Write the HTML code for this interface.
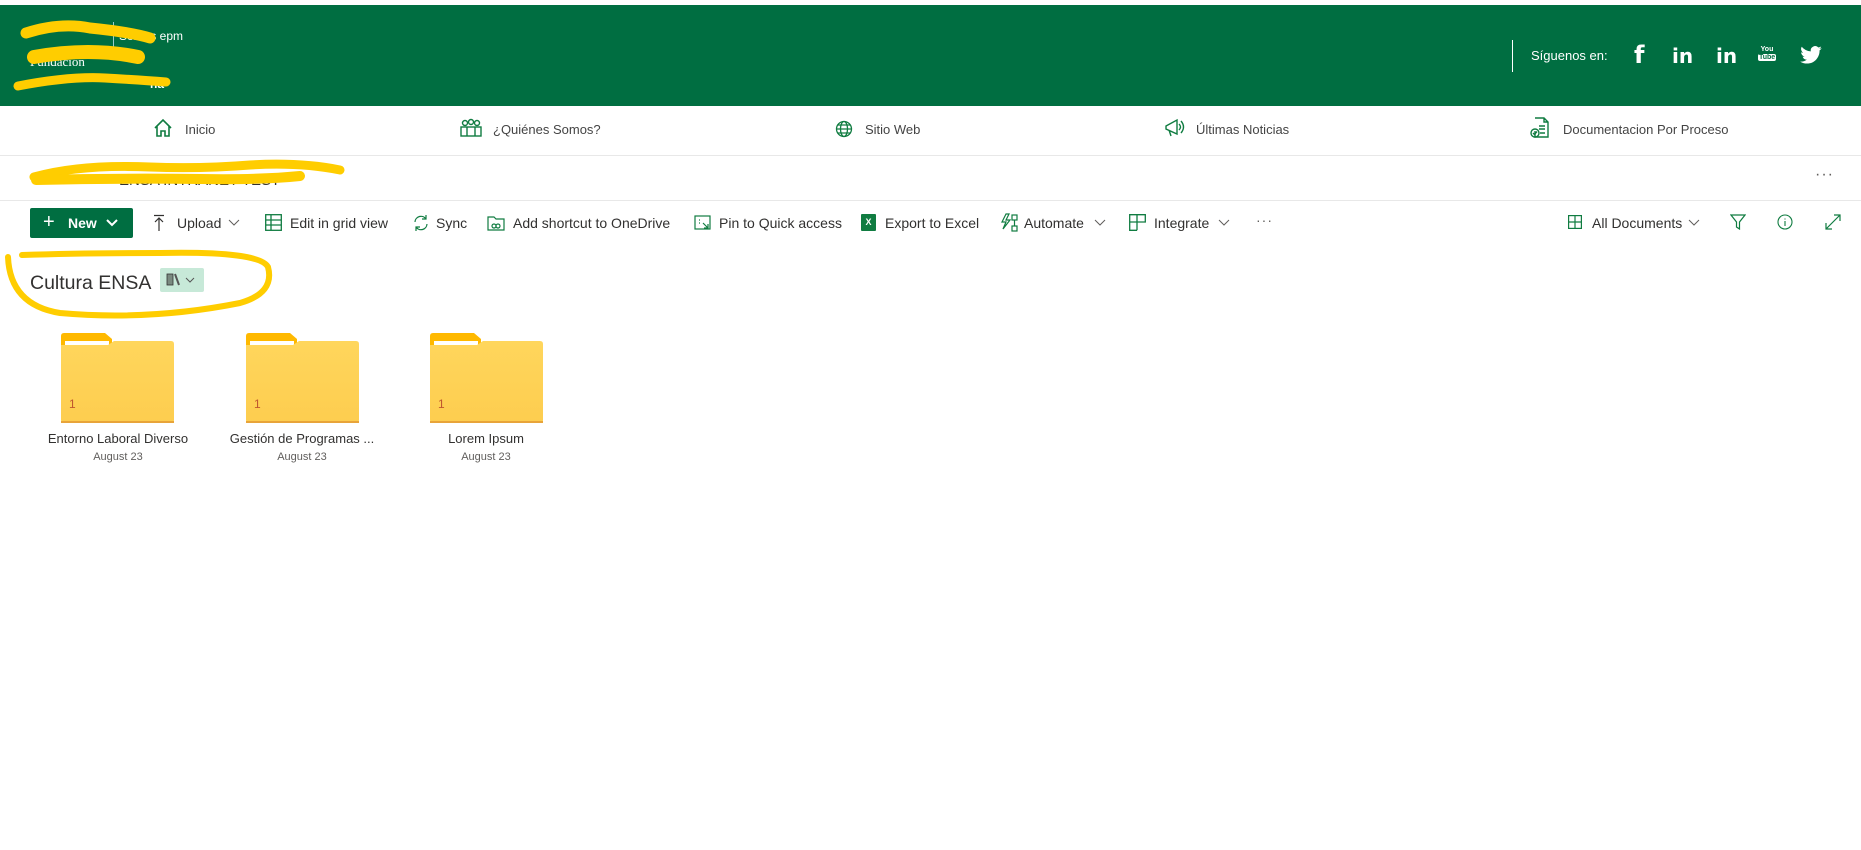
<!DOCTYPE html>
<html><head><meta charset="utf-8"><style>
*{margin:0;padding:0;box-sizing:border-box}
body{width:1861px;height:850px;background:#fff;font-family:"Liberation Sans",sans-serif;position:relative;overflow:hidden;color:#323130}
.a{position:absolute;white-space:nowrap}
.hdr{left:0;top:5px;width:1861px;height:101px;background:#006e41}
.nav{font-size:13px;color:#444;top:122px}
.cmd{font-size:14px;color:#323130;top:215px}
.hr{left:0;width:1861px;height:1px;background:#e8e8e8}
.soc{color:#fff;font-weight:bold;font-size:22px;top:42px}
.fold{width:113px;height:90px}
.lbl{font-size:13px;color:#323130;text-align:center;width:150px}
.dt{font-size:11px;color:#605e5c;text-align:center;width:150px}
</style></head><body>
<div class="a hdr"></div>
<div class="a" style="left:119px;top:29px;font-size:12px;color:#fff">Somos epm</div>
<div class="a" style="left:113px;top:22px;width:1px;height:28px;background:#9cc"></div>
<div class="a" style="left:30px;top:54px;font-size:13px;color:#fff;font-family:'Liberation Serif',serif">Fundación</div>
<div class="a" style="left:150px;top:77px;font-size:12px;color:#fff;font-weight:bold">na</div>
<svg class="a" style="left:0;top:0" width="200" height="100"><g stroke="#ffcd00" stroke-linecap="round" fill="none"><path d="M26 33 Q60 22 90 28 Q130 32 150 38" stroke-width="11"/><path d="M34 57 Q90 47 138 57" stroke-width="14"/><path d="M18 86 Q70 76 105 78 Q140 80 166 82" stroke-width="9"/></g></svg>
<div class="a" style="left:1512px;top:40px;width:1px;height:32px;background:#fff"></div>
<div class="a" style="left:1531px;top:48px;font-size:13px;color:#fff">Síguenos en:</div>
<div class="a soc" style="left:1634px;top:41px;font-size:24px;font-family:'DejaVu Sans',sans-serif">f</div>
<div class="a soc" style="left:1672px;font-family:'DejaVu Sans',sans-serif;font-size:20px;top:44px">in</div>
<div class="a soc" style="left:1716px;font-family:'DejaVu Sans',sans-serif;font-size:20px;top:44px">in</div>
<div class="a" style="left:1758px;top:46px;width:18px;height:20px;color:#fff;font-size:7px;font-weight:bold;text-align:center;line-height:8px">You<br><span style="background:#fff;color:#006e41;border-radius:2px;padding:0 1px">Tube</span></div>
<svg class="a" style="left:1800px;top:46px" width="22" height="18" viewBox="0 0 24 20"><path fill="#fff" d="M24 2.4a10 10 0 0 1-2.8.8A5 5 0 0 0 23.3.5a10 10 0 0 1-3.1 1.2A4.9 4.9 0 0 0 11.8 6 14 14 0 0 1 1.7.9a4.9 4.9 0 0 0 1.5 6.6 4.9 4.9 0 0 1-2.2-.6 4.9 4.9 0 0 0 3.9 4.8 4.9 4.9 0 0 1-2.200.1 4.9 4.9 0 0 0 4.6 3.4A9.9 9.9 0 0 1 0 17.3 14 14 0 0 0 7.5 19.5c9 0 14-7.5 14-14v-.6A10 10 0 0 0 24 2.4z"/></svg>

<svg class="a" style="left:153px;top:118px" width="20" height="20" viewBox="0 0 20 20" fill="none" stroke="#107c41" stroke-width="1.6"><path d="M2 10 L10 2 L18 10 M4 8 V18 H8 V13 H12 V18 H16 V8"/></svg>
<div class="a nav" style="left:185px">Inicio</div>
<svg class="a" style="left:460px;top:118px" width="22" height="20" viewBox="0 0 22 20" fill="none" stroke="#107c41" stroke-width="1.4"><circle cx="5" cy="5" r="2.5"/><circle cx="11" cy="4" r="2.5"/><circle cx="17" cy="5" r="2.5"/><rect x="1" y="9" width="20" height="9"/><path d="M7 9v9M15 9v9"/></svg>
<div class="a nav" style="left:493px">¿Quiénes Somos?</div>
<svg class="a" style="left:835px;top:120px" width="18" height="18" viewBox="0 0 18 18" fill="none" stroke="#107c41" stroke-width="1.3"><circle cx="9" cy="9" r="7.5"/><ellipse cx="9" cy="9" rx="3.5" ry="7.5"/><path d="M1.5 9h15M3 5h12M3 13h12"/></svg>
<div class="a nav" style="left:865px">Sitio Web</div>
<svg class="a" style="left:1163px;top:118px" width="22" height="20" viewBox="0 0 22 20" fill="none" stroke="#107c41" stroke-width="1.4"><path d="M3 8 L14 2 V16 L3 11 Z M6 12 L8 18 M16 6 Q19 9 16 12 M18 3 Q23 9 18 15"/></svg>
<div class="a nav" style="left:1196px">Últimas Noticias</div>
<svg class="a" style="left:1530px;top:117px" width="20" height="22" viewBox="0 0 20 22" fill="none" stroke="#107c41" stroke-width="1.4"><path d="M5 1 H14 L18 5 V20 H5 V14 M14 1 V5 H18 M9 9 H15 M9 12 H15 M10 16 H15"/><circle cx="5" cy="16" r="4"/><path d="M3 16 L4.5 17.5 L7 14.5"/></svg>
<div class="a nav" style="left:1563px">Documentacion Por Proceso</div>
<div class="a hr" style="top:155px"></div>

<div class="a" style="left:119px;top:172px;font-size:15px;color:#323130">ENSA INTRANET TEST</div>
<svg class="a" style="left:0;top:150px" width="360" height="45"><path d="M34 27 Q80 14 150 17 Q200 19 250 15 Q300 12 340 20" stroke="#ffcd00" stroke-width="9" fill="none" stroke-linecap="round"/><path d="M36 30 Q120 28 200 29 Q260 30 300 26" stroke="#ffcd00" stroke-width="10" fill="none" stroke-linecap="round"/></svg>
<div class="a" style="left:1815px;top:166px;font-size:16px;color:#605e5c;letter-spacing:1px">···</div>
<div class="a hr" style="top:200px"></div>

<div class="a" style="left:30px;top:208px;width:103px;height:30px;background:#006e41;border-radius:2px"></div>
<div class="a" style="left:43px;top:211px;font-size:20px;color:#fff">+</div>
<div class="a" style="left:68px;top:215px;font-size:14px;color:#fff;font-weight:bold">New</div>
<svg class="a" style="left:105px;top:218px" width="14" height="10" viewBox="0 0 14 10"><path d="M2 2 L7 7 L12 2" stroke="#fff" stroke-width="2" fill="none"/></svg>

<svg class="a" style="left:153px;top:214px" width="12" height="18" viewBox="0 0 12 18" fill="none" stroke="#323130" stroke-width="1.2"><path d="M1 1.5H11M6 4V17M2 8L6 4L10 8"/></svg>
<div class="a cmd" style="left:177px">Upload</div>
<svg class="a" style="left:228px;top:219px" width="12" height="8"><path d="M1 1 L6 6 L11 1" stroke="#605e5c" fill="none"/></svg>
<svg class="a" style="left:265px;top:214px" width="17" height="17" viewBox="0 0 17 17" fill="none" stroke="#107c41" stroke-width="1.3"><rect x=".7" y=".7" width="15.6" height="15.6"/><path d="M.7 6H16.3M.7 11H16.3M6 .7V16.3"/></svg>
<div class="a cmd" style="left:290px">Edit in grid view</div>
<svg class="a" style="left:412px;top:214px" width="18" height="18" viewBox="0 0 18 18" fill="none" stroke="#107c41" stroke-width="1.2"><path d="M3 8 A6 6 0 0 1 14 5 M15 10 A6 6 0 0 1 4 13 M14 1V5H10M4 17V13H8"/></svg>
<div class="a cmd" style="left:436px">Sync</div>
<svg class="a" style="left:487px;top:214px" width="18" height="18" viewBox="0 0 18 18" fill="none" stroke="#107c41" stroke-width="1.2"><path d="M1 3H7L9 5H17V16H1Z"/><circle cx="7" cy="12" r="2"/><circle cx="11" cy="12" r="2"/></svg>
<div class="a cmd" style="left:513px">Add shortcut to OneDrive</div>
<svg class="a" style="left:694px;top:214px" width="18" height="18" viewBox="0 0 18 18" fill="none" stroke="#107c41" stroke-width="1.2"><rect x="1" y="2" width="15" height="13"/><path d="M5 6h1M5 9h1M9 9l5 5M10 14h4v-4"/></svg>
<div class="a cmd" style="left:719px">Pin to Quick access</div>
<div class="a" style="left:861px;top:214px;width:15px;height:17px;background:#107c41;color:#fff;font-size:9px;font-weight:bold;text-align:center;line-height:17px;border-radius:1px">X</div>
<div class="a cmd" style="left:885px">Export to Excel</div>
<svg class="a" style="left:1000px;top:213px" width="18" height="20" viewBox="0 0 18 20" fill="none" stroke="#107c41" stroke-width="1.2"><path d="M6 1L2 9H6L3 16L10 7H6L9 1Z"/><rect x="12" y="2" width="5" height="5"/><rect x="12" y="13" width="5" height="5"/><path d="M14.5 7V13"/></svg>
<div class="a cmd" style="left:1024px">Automate</div>
<svg class="a" style="left:1094px;top:219px" width="12" height="8"><path d="M1 1 L6 6 L11 1" stroke="#605e5c" fill="none"/></svg>
<svg class="a" style="left:1129px;top:214px" width="17" height="17" viewBox="0 0 17 17" fill="none" stroke="#107c41" stroke-width="1.3"><path d="M.7 .7H16.3V8H.7ZM8 .7V16.3M.7 8V16.3H8"/></svg>
<div class="a cmd" style="left:1154px">Integrate</div>
<svg class="a" style="left:1218px;top:219px" width="12" height="8"><path d="M1 1 L6 6 L11 1" stroke="#605e5c" fill="none"/></svg>
<div class="a" style="left:1256px;top:212px;font-size:14px;color:#605e5c;letter-spacing:1px">···</div>

<svg class="a" style="left:1568px;top:215px" width="14" height="14" viewBox="0 0 14 14" fill="none" stroke="#107c41" stroke-width="1.2"><rect x=".6" y=".6" width="12.8" height="12.8"/><path d="M7 .6V13.4M.6 7H13.4"/></svg>
<div class="a cmd" style="left:1592px">All Documents</div>
<svg class="a" style="left:1688px;top:219px" width="12" height="8"><path d="M1 1 L6 6 L11 1" stroke="#605e5c" fill="none"/></svg>
<svg class="a" style="left:1730px;top:214px" width="16" height="16" viewBox="0 0 16 16" fill="none" stroke="#107c41" stroke-width="1.2"><path d="M1 1H15L9.5 8V15L6.5 13V8Z"/></svg>
<svg class="a" style="left:1777px;top:214px" width="16" height="16" viewBox="0 0 16 16" fill="none" stroke="#107c41" stroke-width="1.1"><circle cx="8" cy="8" r="7"/><path d="M8 7V12M8 4.5V5.5"/></svg>
<svg class="a" style="left:1825px;top:214px" width="16" height="16" viewBox="0 0 16 16" fill="none" stroke="#107c41" stroke-width="1.2"><path d="M1 15L15 1M9 1H15V7M1 9V15H7"/></svg>

<div class="a" style="left:30px;top:272px;font-size:19.5px;color:#323130">Cultura ENSA</div>
<div class="a" style="left:160px;top:268px;width:44px;height:24px;background:#c7e9d8;border-radius:2px"></div>
<svg class="a" style="left:165px;top:272px" width="36" height="16" viewBox="0 0 36 16"><rect x="2" y="2" width="6" height="11" fill="#7a8a80" stroke="#333" stroke-width=".8"/><path d="M10 2 L14 13" stroke="#555" stroke-width="2"/><path d="M21 6 L25 10 L29 6" stroke="#555" fill="none"/></svg>
<svg class="a" style="left:0;top:245px" width="285" height="80"><path d="M8 12 Q10 60 60 68 Q150 76 240 58 Q275 48 268 22 Q260 6 160 8 Q80 8 22 10" stroke="#ffcd00" stroke-width="6" fill="none" stroke-linecap="round"/></svg>

<svg width="0" height="0" style="position:absolute"><defs><linearGradient id="g" x1="0" y1="0" x2="0" y2="1"><stop offset="0" stop-color="#ffd65c"/><stop offset="1" stop-color="#fdcd4f"/></linearGradient></defs></svg>
<svg class="a fold" style="left:61px;top:333px" viewBox="0 0 113 90"><path d="M0 3Q0 0 3 0H44L51 6V12H0Z" fill="#ffb900"/><rect x="4" y="8" width="44" height="5" fill="#fff"/><path d="M0 12H47L53 8H110Q113 8 113 11V87Q113 90 110 90H3Q0 90 0 87Z" fill="url(#g)"/><rect x="0" y="88" width="113" height="2" fill="#e8a43a"/><text x="8" y="75" font-family="Liberation Sans" font-size="12" fill="#c0572e">1</text></svg>
<svg class="a fold" style="left:246px;top:333px" viewBox="0 0 113 90"><path d="M0 3Q0 0 3 0H44L51 6V12H0Z" fill="#ffb900"/><rect x="4" y="8" width="44" height="5" fill="#fff"/><path d="M0 12H47L53 8H110Q113 8 113 11V87Q113 90 110 90H3Q0 90 0 87Z" fill="url(#g)"/><rect x="0" y="88" width="113" height="2" fill="#e8a43a"/><text x="8" y="75" font-family="Liberation Sans" font-size="12" fill="#c0572e">1</text></svg>
<svg class="a fold" style="left:430px;top:333px" viewBox="0 0 113 90"><path d="M0 3Q0 0 3 0H44L51 6V12H0Z" fill="#ffb900"/><rect x="4" y="8" width="44" height="5" fill="#fff"/><path d="M0 12H47L53 8H110Q113 8 113 11V87Q113 90 110 90H3Q0 90 0 87Z" fill="url(#g)"/><rect x="0" y="88" width="113" height="2" fill="#e8a43a"/><text x="8" y="75" font-family="Liberation Sans" font-size="12" fill="#c0572e">1</text></svg>
<div class="a lbl" style="left:43px;top:431px">Entorno Laboral Diverso</div>
<div class="a dt" style="left:43px;top:451px">August 23</div>
<div class="a lbl" style="left:227px;top:431px">Gestión de Programas ...</div>
<div class="a dt" style="left:227px;top:451px">August 23</div>
<div class="a lbl" style="left:411px;top:431px">Lorem Ipsum</div>
<div class="a dt" style="left:411px;top:451px">August 23</div>
</body></html>
